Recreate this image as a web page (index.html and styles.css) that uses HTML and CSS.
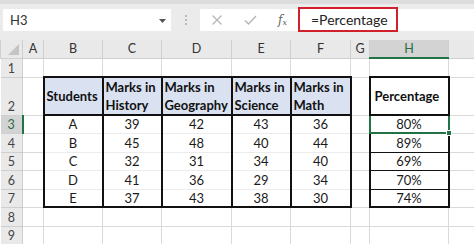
FILE: index.html
```html
<!DOCTYPE html>
<html>
<head>
<meta charset="utf-8">
<link rel="stylesheet" href="styles.css">
</head>
<body>
<div class="app">
  <div class="fbar">
    <div class="namebox">
      <span class="ref">H3</span>
      <svg class="caret" width="7" height="4" viewBox="0 0 7 4"><path d="M0 0h7L3.5 4z" fill="#555"/></svg>
    </div>
    <div class="dots"><i></i><i></i><i></i></div>
    <div class="formula">
      <svg class="ico" width="12" height="12" viewBox="0 0 12 12"><path d="M1.5 1.5l9 9M10.5 1.5l-9 9" stroke="#b5b5b5" stroke-width="1.3" fill="none"/></svg>
      <svg class="ico ok" width="13" height="12" viewBox="0 0 13 12"><path d="M1 6.5l3.5 3.5L12 2" stroke="#b5b5b5" stroke-width="1.3" fill="none"/></svg>
      <span class="fx">f<sub>x</sub></span>
      <div class="fcontent">=Percentage</div>
    </div>
  </div>
  <table class="sheet">
    <colgroup>
      <col class="w-rh"><col class="w-a"><col class="w-b"><col class="w-c"><col class="w-d"><col class="w-e"><col class="w-f"><col class="w-g"><col class="w-h"><col class="w-i">
    </colgroup>
    <tr class="hdr">
      <th class="corner"><span class="tri"></span></th><th>A</th><th>B</th><th>C</th><th>D</th><th>E</th><th>F</th><th>G</th><th class="selcol">H</th><th></th>
    </tr>
    <tr class="r1">
      <th class="rh">1</th><td></td><td></td><td></td><td></td><td></td><td></td><td></td><td></td><td></td>
    </tr>
    <tr class="r2">
      <th class="rh bottom">2</th><td></td>
      <td class="th tl">Students</td>
      <td class="th">Marks in<br>History</td>
      <td class="th">Marks in<br>Geography</td>
      <td class="th">Marks in<br>Science</td>
      <td class="th tr">Marks in<br>Math</td>
      <td></td>
      <td class="pct-h">Percentage</td>
      <td></td>
    </tr>
    <tr class="r">
      <th class="rh selrow">3</th><td></td>
      <td class="d dl">A</td><td class="d">39</td><td class="d">42</td><td class="d">43</td><td class="d dr">36</td><td></td>
      <td class="p sel">80%<span class="handle"></span></td><td></td>
    </tr>
    <tr class="r alt">
      <th class="rh">4</th><td></td>
      <td class="d dl">B</td><td class="d">45</td><td class="d">48</td><td class="d">40</td><td class="d dr">44</td><td></td>
      <td class="p">89%</td><td></td>
    </tr>
    <tr class="r">
      <th class="rh">5</th><td></td>
      <td class="d dl">C</td><td class="d">32</td><td class="d">31</td><td class="d">34</td><td class="d dr">40</td><td></td>
      <td class="p">69%</td><td></td>
    </tr>
    <tr class="r alt">
      <th class="rh">6</th><td></td>
      <td class="d dl">D</td><td class="d">41</td><td class="d">36</td><td class="d">29</td><td class="d dr">34</td><td></td>
      <td class="p">70%</td><td></td>
    </tr>
    <tr class="r">
      <th class="rh">7</th><td></td>
      <td class="d dl db">E</td><td class="d db">37</td><td class="d db">43</td><td class="d db">38</td><td class="d dr db">30</td><td></td>
      <td class="p pb">74%</td><td></td>
    </tr>
    <tr class="r alt">
      <th class="rh">8</th><td></td><td></td><td></td><td></td><td></td><td></td><td></td><td></td><td></td>
    </tr>
    <tr class="r">
      <th class="rh">9</th><td></td><td></td><td></td><td></td><td></td><td></td><td></td><td></td><td></td>
    </tr>
  </table>
</div>
</body>
</html>
```

FILE: styles.css
```css
* { box-sizing: border-box; }
html, body { margin: 0; padding: 0; background: #fff; }
body { width: 474px; height: 244px; overflow: hidden; font-family: Lato, "Open Sans", sans-serif; color: #1a1a1a; }

.app { width: 474px; }

.fbar {
  height: 40px;
  background: linear-gradient(#dcdcdc 0, #dcdcdc 4px, #ebebeb 4px);
  display: flex;
  align-items: flex-start;
  padding-top: 9px;
  padding-left: 3px;
}
.namebox {
  width: 168px; height: 22px; background: #fff;
  display: flex; align-items: center; justify-content: space-between;
  padding: 0 5px 0 7px;
  font-size: 13px; color: #333;
}
.caret { margin-top: 1px; }
.dots { width: 29px; height: 22px; display: flex; flex-direction: column; align-items: center; justify-content: center; gap: 2px; }
.dots i { display: block; width: 2px; height: 2px; background: #b9b9b9; }
.formula {
  flex: 1; height: 22px; background: #fff;
  display: flex; align-items: center; padding-left: 11px;
}
.ico { display: block; }
.ok { margin-left: 21px; }
.fx { margin-left: 21px; font-family: "DejaVu Serif", serif; font-style: italic; font-size: 12px; color: #666; width: 20px; }
.fx sub { font-size: 8px; vertical-align: -1px; }
.fcontent {
  margin-left: 0;
  margin-top: -2px;
  width: 100px; height: 25px;
  border: 2px solid #d21f2c;
  font-size: 14px; color: #222;
  padding-left: 11px; line-height: 21px;
}

.sheet { border-collapse: collapse; table-layout: fixed; width: 474px; }
.w-rh { width: 22px; } .w-a { width: 21px; } .w-b { width: 59px; } .w-c { width: 59px; }
.w-d { width: 70px; } .w-e { width: 59px; } .w-f { width: 60px; } .w-g { width: 19px; }
.w-h { width: 79px; } .w-i { width: 26px; }

.sheet td, .sheet th { padding: 0; border: 1px solid #dadada; font-weight: normal; overflow: hidden; white-space: nowrap; }
.hdr th {
  height: 18px; background: #e9e9e9; border-color: #cfcfcf; border-top: 0;
  font-size: 12.5px; color: #333; text-align: center; line-height: 16px;
}
.hdr th.selcol { background: #d3d3d3; border-bottom: 2px solid #217346; color: #2a6b40; }
.corner { position: relative; }
.tri { position: absolute; right: 3px; bottom: 3px; width: 0; height: 0; border-left: 11px solid transparent; border-bottom: 11px solid #c4c4c4; }
.rh { background: #e9e9e9; border-color: #cfcfcf !important; border-left: 0 !important; font-size: 12.5px; color: #444; text-align: center; vertical-align: bottom; line-height: 17px; }
.rh.selrow { background: #d3d3d3; border-right: 2px solid #217346 !important; color: #2a6b40; }
.r1 td, .r1 th { height: 19px; }
.r2 td, .r2 th { height: 38px; }
.r td, .r th { height: 18px; }
.r.alt td, .r.alt th { height: 19px; }

.sheet td.th {
  background: #dae2f1; font-weight: bold; font-size: 13px; line-height: 18px; color: #111;
  border: 2px solid #111; white-space: nowrap; padding-left: 2px; text-align: left;
}
.sheet td.tl { vertical-align: middle; }
.sheet td.d { text-align: center; font-size: 13px; line-height: 16px; border-left: 2px solid #111; border-right: 2px solid #111; border-top-color: #ececec; border-bottom-color: #ececec; }
.sheet td.db { border-bottom: 2px solid #111; }

.sheet td.pct-h { border: 2px solid #111; font-weight: bold; font-size: 13px; padding-left: 4px; color: #111; }
.sheet td.p { text-align: center; font-size: 13px; line-height: 16px; border: 1px solid #111; border-left: 2px solid #111; border-right: 2px solid #111; position: relative; overflow: visible; }
.sheet td.pb { border-bottom: 2px solid #111; }
.sheet td.p.sel { border: 2px solid #217346; }
.handle { position: absolute; right: -4px; bottom: -4px; width: 6px; height: 6px; background: #217346; border: 1px solid #fff; }
```
